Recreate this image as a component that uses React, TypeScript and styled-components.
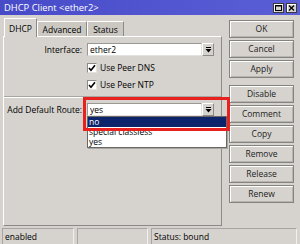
import React from 'react';
import styled, { createGlobalStyle } from 'styled-components';

const Global = createGlobalStyle`
  html, body { margin: 0; padding: 0; background: #d6d3ce; }
  body {
    font-family: "Open Sans", "DejaVu Sans", sans-serif;
    font-size: 8.5px;
    color: #000;
  }
  * { box-sizing: border-box; }
`;

const Window = styled.div`
  position: relative;
  width: 300px;
  height: 244px;
  background: #d6d3ce;
  display: flex;
  flex-direction: column;
  overflow: hidden;
`;

const TitleBar = styled.div`
  flex: none;
  height: 15px;
  background: linear-gradient(to right, #484bc8, #5a5ed6);
  display: flex;
  align-items: center;
  padding: 0 3px 0 4px;
  color: #fff;
  font-size: 9.4px;
`;

const Title = styled.span`
  flex: 1;
  white-space: nowrap;
`;

const TitleButton = styled.div`
  width: 11px;
  height: 10px;
  margin-left: 2px;
  background: #d6d3ce;
  border: 1px solid #3a3a3a;
  box-shadow: inset 1px 1px 0 #fff;
  display: flex;
  align-items: center;
  justify-content: center;
`;

const Body = styled.div`
  flex: 1;
  display: flex;
  min-height: 0;
`;

const LeftColumn = styled.div`
  width: 222px;
  padding-left: 3px;
  display: flex;
  flex-direction: column;
  padding-bottom: 2px;
`;

const TabRow = styled.div`
  height: 21px;
  display: flex;
  align-items: flex-end;
  padding-left: 1px;
  flex: none;
`;

const Tab = styled.div<{ $active?: boolean; $w: number }>`
  height: ${p => (p.$active ? '19px' : '15px')};
  width: ${p => p.$w}px;
  display: flex;
  align-items: center;
  justify-content: center;
  background: ${p => (p.$active ? '#d6d3ce' : '#cbc8c2')};
  border-top: 1px solid #fff;
  border-left: 1px solid #fff;
  border-right: 1px solid #8c8a86;
  margin-bottom: ${p => (p.$active ? '-1px' : '0')};
  position: relative;
  z-index: ${p => (p.$active ? 1 : 0)};
  padding-top: ${p => (p.$active ? '0' : '1px')};
`;

const Panel = styled.div`
  flex: 1;
  position: relative;
  border-top: 1px solid #fff;
  border-left: 1px solid #fff;
  border-right: 1px solid #8c8a86;
  border-bottom: 1px solid #8c8a86;
  padding-top: 6px;
  display: flex;
  flex-direction: column;
`;

const FormRow = styled.div<{ $mt?: number }>`
  display: grid;
  grid-template-columns: 78px 127px;
  column-gap: 5px;
  align-items: center;
  height: 13px;
  margin-top: ${p => p.$mt ?? 0}px;
`;

const Label = styled.div`
  text-align: right;
  white-space: nowrap;
`;

const Combo = styled.div`
  position: relative;
  display: flex;
  height: 13px;
`;

const Field = styled.div`
  flex: 1;
  background: #fff;
  border-top: 1px solid #9a9894;
  border-left: 1px solid #9a9894;
  border-bottom: 1px solid #e4e2de;
  border-right: 1px solid #e4e2de;
  padding-left: 2px;
  display: flex;
  align-items: center;
  white-space: nowrap;
`;

const DropButton = styled.div`
  width: 12px;
  background: #d6d3ce;
  border-top: 1px solid #fff;
  border-left: 1px solid #fff;
  border-right: 1px solid #8c8a86;
  border-bottom: 1px solid #8c8a86;
  display: flex;
  align-items: center;
  justify-content: center;
`;

const CheckWrap = styled.div`
  display: flex;
  align-items: center;
  gap: 3px;
  white-space: nowrap;
`;

const CheckBox = styled.div`
  width: 10px;
  height: 10px;
  background: #fff;
  border-top: 1px solid #8c8a86;
  border-left: 1px solid #8c8a86;
  border-bottom: 1px solid #e4e2de;
  border-right: 1px solid #e4e2de;
  display: flex;
  align-items: center;
  justify-content: center;
`;

const Separator = styled.div`
  height: 2px;
  margin-top: 5px;
  border-top: 1px solid #a8a6a2;
  border-bottom: 1px solid #fff;
`;

const DropList = styled.div`
  position: absolute;
  top: 13px;
  left: 0;
  width: 140px;
  background: #fff;
  border: 1px solid #6a6864;
  box-shadow: 1px 1px 0 #a8a6a2;
  z-index: 5;
`;

const ListItem = styled.div<{ $selected?: boolean }>`
  height: 10px;
  line-height: 10px;
  padding-left: 1px;
  white-space: nowrap;
  background: ${p => (p.$selected ? '#0c246c' : 'transparent')};
  color: ${p => (p.$selected ? '#fff' : '#000')};
`;

const RightColumn = styled.div`
  width: 65px;
  margin-left: 7px;
  padding-top: 5px;
  display: flex;
  flex-direction: column;
  gap: 2.5px;
`;

const ActionButton = styled.div<{ $gapBefore?: number }>`
  height: 17.5px;
  flex: none;
  display: flex;
  align-items: center;
  justify-content: center;
  background: #d6d3ce;
  border: 1px solid #85837f;
  box-shadow: inset 1px 1px 0 #fff, inset -1px -1px 0 #b8b5b0;
  margin-top: ${p => p.$gapBefore ?? 0}px;
  color: #222;
`;

const StatusBar = styled.div`
  flex: none;
  height: 16px;
  display: flex;
  gap: 3px;
  padding: 0 3px 0 2px;
`;

const StatusField = styled.div<{ $w?: number }>`
  ${p => (p.$w ? `width: ${p.$w}px;` : 'flex: 1;')}
  height: 16px;
  border-top: 1px solid #a8a6a2;
  border-left: 1px solid #a8a6a2;
  border-right: 1px solid #f2f0ec;
  padding-left: 2px;
  display: flex;
  align-items: center;
  white-space: nowrap;
`;

const Highlight = styled.div`
  position: absolute;
  left: 83px;
  top: 97px;
  width: 147px;
  height: 34px;
  border: 3px solid #e8201e;
  z-index: 10;
  pointer-events: none;
`;

const DropIcon = () => (
  <svg width="7" height="6" viewBox="0 0 7 6">
    <rect x="1" y="0" width="5" height="1" fill="#000" />
    <path d="M0.5 2h6L3.5 5.5z" fill="#000" />
  </svg>
);

const CheckIcon = () => (
  <svg width="8" height="8" viewBox="0 0 8 8">
    <path d="M1 4l2 2.2L7 1.2" stroke="#000" strokeWidth="1.6" fill="none" />
  </svg>
);

const MaxIcon = () => (
  <svg width="7" height="6" viewBox="0 0 7 6">
    <rect x="0.5" y="0.5" width="6" height="5" fill="none" stroke="#000" />
    <rect x="0.5" y="0.5" width="6" height="1" fill="#000" />
  </svg>
);

const CloseIcon = () => (
  <svg width="7" height="6" viewBox="0 0 7 6">
    <path d="M1 0.5l5 5M6 0.5l-5 5" stroke="#000" strokeWidth="1.3" />
  </svg>
);

export default function App() {
  return (
    <>
      <Global />
      <Window>
        <TitleBar>
          <Title>DHCP Client &lt;ether2&gt;</Title>
          <TitleButton><MaxIcon /></TitleButton>
          <TitleButton><CloseIcon /></TitleButton>
        </TitleBar>
        <Body>
          <LeftColumn>
            <TabRow>
              <Tab $active $w={33}>DHCP</Tab>
              <Tab $w={50}>Advanced</Tab>
              <Tab $w={37}>Status</Tab>
            </TabRow>
            <Panel>
              <FormRow>
                <Label>Interface:</Label>
                <Combo>
                  <Field>ether2</Field>
                  <DropButton><DropIcon /></DropButton>
                </Combo>
              </FormRow>
              <FormRow $mt={5}>
                <span />
                <CheckWrap>
                  <CheckBox><CheckIcon /></CheckBox>
                  Use Peer DNS
                </CheckWrap>
              </FormRow>
              <FormRow $mt={4}>
                <span />
                <CheckWrap>
                  <CheckBox><CheckIcon /></CheckBox>
                  Use Peer NTP
                </CheckWrap>
              </FormRow>
              <Separator />
              <FormRow $mt={5}>
                <Label>Add Default Route:</Label>
                <Combo>
                  <Field>yes</Field>
                  <DropButton><DropIcon /></DropButton>
                  <DropList>
                    <ListItem $selected>no</ListItem>
                    <ListItem>special classless</ListItem>
                    <ListItem>yes</ListItem>
                  </DropList>
                </Combo>
              </FormRow>
            </Panel>
          </LeftColumn>
          <RightColumn>
            <ActionButton>OK</ActionButton>
            <ActionButton>Cancel</ActionButton>
            <ActionButton>Apply</ActionButton>
            <ActionButton $gapBefore={5}>Disable</ActionButton>
            <ActionButton>Comment</ActionButton>
            <ActionButton>Copy</ActionButton>
            <ActionButton>Remove</ActionButton>
            <ActionButton>Release</ActionButton>
            <ActionButton>Renew</ActionButton>
          </RightColumn>
        </Body>
        <StatusBar>
          <StatusField $w={72}>enabled</StatusField>
          <StatusField $w={71} />
          <StatusField>Status: bound</StatusField>
        </StatusBar>
        <Highlight />
      </Window>
    </>
  );
}
